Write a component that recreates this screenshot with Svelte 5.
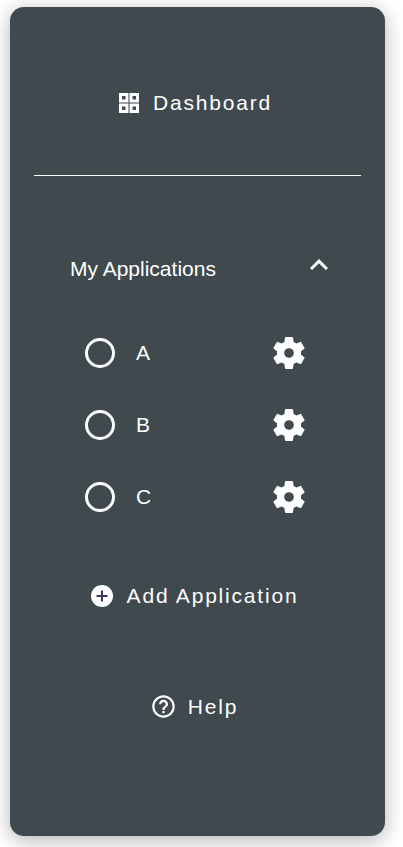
<script>
  const apps = ['A', 'B', 'C'];
</script>

<div class="page">
  <aside class="card">
    <a class="link dash">
      <svg class="i-dash" viewBox="0 0 20 20" aria-hidden="true"><path fill="#fff" fill-rule="evenodd" d="M0 0h9.500v9.500H0zM3 3v3.500h3.500V3zM10.500 0H20v9.500h-9.500zM13.500 3v3.500H17V3zM0 10.500h9.500V20H0zM3 13.500V17h3.500v-3.500zM10.500 10.500H20V20h-9.500zM13.500 13.500V17H17v-3.500z"/></svg>
      <span>Dashboard</span>
    </a>
    <hr />
    <div class="section">
      <span class="title">My Applications</span>
      <svg class="chev" viewBox="0 0 24 24" aria-hidden="true"><path fill="#fff" d="M7.41 15.41 12 10.83l4.59 4.58L18 14l-6-6-6 6z"/></svg>
    </div>
    <ul>
      {#each apps as a}
        <li>
          <span class="radio"></span>
          <span class="name">{a}</span>
          <svg class="gear" viewBox="0 0 24 24" aria-hidden="true"><path fill="#fff" fill-rule="evenodd" d="M19.14 12.94c.04-.3.06-.61.06-.94 0-.32-.02-.64-.07-.94l2.03-1.58a.49.49 0 0 0 .12-.61l-1.92-3.32a.488.488 0 0 0-.59-.22l-2.39.96c-.5-.38-1.03-.7-1.62-.94l-.36-2.54a.484.484 0 0 0-.48-.41h-3.84c-.24 0-.43.17-.47.41l-.36 2.54c-.59.24-1.13.57-1.62.94l-2.39-.96c-.22-.08-.47 0-.59.22L2.74 8.87c-.12.21-.08.47.12.61l2.03 1.58c-.05.3-.09.63-.09.94s.02.64.07.94l-2.03 1.58a.49.49 0 0 0-.12.61l1.92 3.32c.12.22.37.29.59.22l2.39-.96c.5.38 1.03.7 1.62.94l.36 2.54c.05.24.24.41.48.41h3.84c.24 0 .44-.17.47-.41l.36-2.54c.59-.24 1.13-.56 1.62-.94l2.39.96c.22.08.47 0 .59-.22l1.92-3.32c.12-.22.07-.47-.12-.61l-2.01-1.58zM12 14.900a2.900 2.900 0 1 1 0-5.800 2.900 2.900 0 0 1 0 5.800z"/></svg>
        </li>
      {/each}
    </ul>
    <a class="link add">
      <svg class="i-add" viewBox="0 0 22 22" aria-hidden="true"><circle cx="11" cy="11" r="11" fill="#fff"/><path fill="#3b3a5c" d="M10 5.500h2V10h4.500v2H12v4.500h-2V12H5.500v-2H10z"/></svg>
      <span>Add Application</span>
    </a>
    <a class="link help">
      <svg class="i-help" viewBox="0 0 24 24" aria-hidden="true"><path fill="#fff" d="M11 18h2v-2h-2v2zm1-16C6.480 2 2 6.480 2 12s4.480 10 10 10 10-4.480 10-10S17.520 2 12 2zm0 18c-4.410 0-8-3.590-8-8s3.590-8 8-8 8 3.590 8 8-3.590 8-8 8zm0-14c-2.210 0-4 1.790-4 4h2c0-1.100.9-2 2-2s2 .9 2 2c0 2-3 1.750-3 5h2c0-2.250 3-2.500 3-5 0-2.210-1.790-4-4-4z"/></svg>
      <span>Help</span>
    </a>
  </aside>
</div>

<style>
  :global(body) {
    margin: 0;
    background: #fff;
  }
  .page {
    height: 847px;
    box-sizing: border-box;
    padding: 7px 18px 11px 10px;
    font-family: "Liberation Sans", Arial, sans-serif;
    color: #fff;
    overflow: hidden;
  }
  .card {
    height: 829px;
    box-sizing: border-box;
    background: #3f494e;
    border-radius: 14px;
    box-shadow: 0 4px 20px rgba(0, 0, 0, 0.3);
    padding: 84px 24px 0;
    display: flex;
    flex-direction: column;
  }
  .link {
    display: flex;
    align-items: center;
    justify-content: center;
    font-size: 21px;
    line-height: 24px;
    letter-spacing: 1.8px;
  }
  .dash {
    gap: 14px;
    padding-right: 4px;
  }
  .i-dash {
    width: 20px;
    height: 20px;
  }
  hr {
    border: 0;
    height: 1px;
    background: #fff;
    margin: 60px 0 0;
  }
  .section {
    display: flex;
    align-items: center;
    justify-content: space-between;
    margin-top: 81px;
    padding: 0 24px 0 36px;
    height: 24px;
    font-size: 21px;
    line-height: 24px;
  }
  .chev {
    width: 36px;
    height: 36px;
    margin-top: -9px;
  }
  ul {
    list-style: none;
    margin: 54px 0 0;
    padding: 0 0 0 51px;
    display: flex;
    flex-direction: column;
    gap: 36px;
  }
  li {
    height: 36px;
    display: flex;
    align-items: center;
    font-size: 21px;
  }
  .radio {
    width: 30px;
    height: 30px;
    box-sizing: border-box;
    border: 3px solid #fff;
    border-radius: 50%;
  }
  .name {
    margin-left: 21px;
    width: 133px;
  }
  .gear {
    width: 40px;
    height: 40px;
    flex: none;
  }
  .add {
    margin-top: 69px;
    gap: 14px;
    padding-right: 6px;
  }
  .i-add {
    width: 22px;
    height: 22px;
  }
  .help {
    margin-top: 85px;
    gap: 11px;
    padding-right: 7px;
  }
  .i-help {
    width: 27px;
    height: 27px;
  }
</style>
